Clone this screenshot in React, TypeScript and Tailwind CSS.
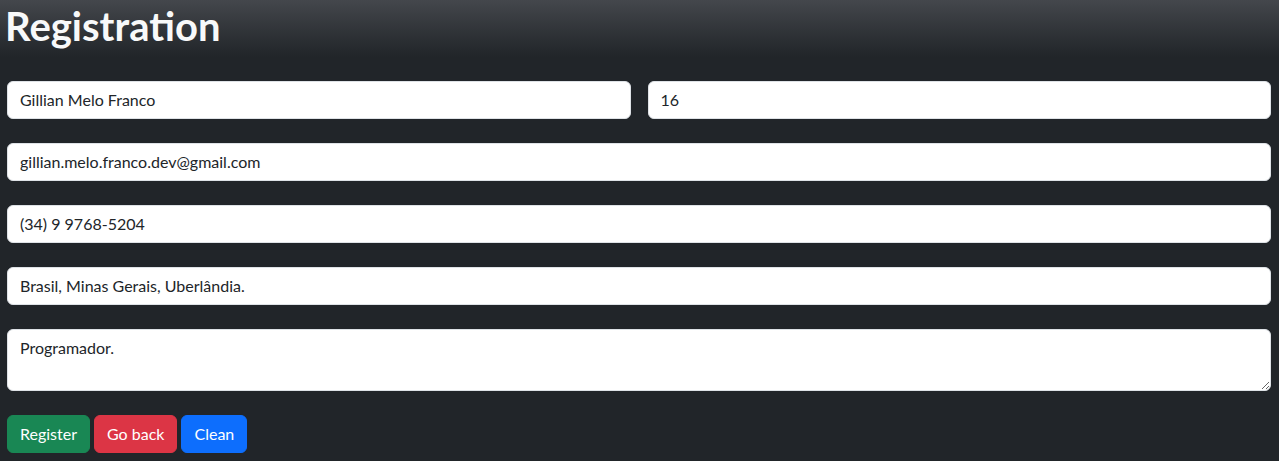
import React from "react";

const inputClass =
    "block w-full rounded-[6px] border border-[#dee2e6] bg-white px-3 py-[6px] text-base leading-6 text-[#212529] outline-none";

const buttonClass = "rounded-[6px] border px-3 py-[6px] text-base leading-6 text-white";

export default function App() {
    return (
        <div className="min-h-[461px] bg-[#212529] font-['Lato',sans-serif]">
            <header className="h-[57px] bg-gradient-to-b from-[#44474c] to-[#212529] px-[5px]">
                <h1 className="m-0 text-[40px] font-bold leading-[52px] text-[#f8f9fa]">Registration</h1>
            </header>

            <form className="flex flex-col gap-6 px-[7px] pt-6 pr-[8px]">
                <div className="flex gap-[17px]">
                    <input className={inputClass} defaultValue="Gillian Melo Franco" />
                    <input className={inputClass} defaultValue="16" />
                </div>
                <input className={inputClass} defaultValue="gillian.melo.franco.dev@gmail.com" />
                <input className={inputClass} defaultValue="(34) 9 9768-5204" />
                <input className={inputClass} defaultValue="Brasil, Minas Gerais, Uberlândia." />
                <textarea className={`${inputClass} h-[62px] resize-y`} defaultValue="Programador." />

                <div className="flex gap-[4px]">
                    <button type="button" className={`${buttonClass} border-[#198754] bg-[#198754]`}>
                        Register
                    </button>
                    <button type="button" className={`${buttonClass} border-[#dc3545] bg-[#dc3545]`}>
                        Go back
                    </button>
                    <button type="button" className={`${buttonClass} border-[#0d6efd] bg-[#0d6efd]`}>
                        Clean
                    </button>
                </div>
            </form>
        </div>
    );
}
